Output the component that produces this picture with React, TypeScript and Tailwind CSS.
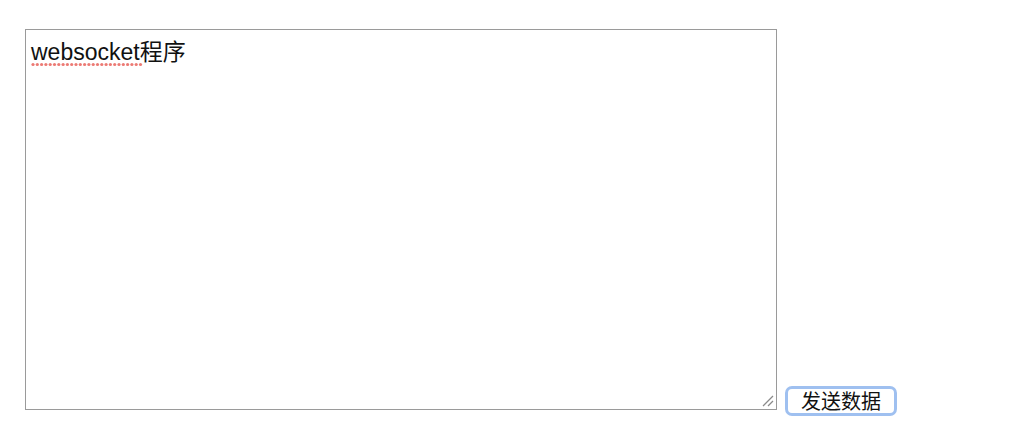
export default function App() {
  return (
    <div className="w-[1014px] h-[438px] bg-white pl-[25px] pt-[29px]">
      <div className="flex items-end gap-[8px]">
        <div className="relative w-[752px] h-[381px]">
          <textarea
            defaultValue="websocket程序"
            spellCheck={false}
            className="block w-full h-full resize-none border border-[#9a9a9a] bg-white pl-[5px] pt-[9px] text-[23px] leading-[26px] text-[#111] outline-none"
            style={{ fontFamily: '"Liberation Sans", "Noto Sans CJK SC", sans-serif' }}
          />
          {/* spellcheck squiggle */}
          <svg className="absolute left-[6px] top-[33px]" width="112" height="5" viewBox="0 0 112 5">
            {Array.from({ length: 26 }).map((_, i) => (
              <circle key={i} cx={2 + i * 4.3} cy={2.5} r={1.6} fill="#ec7a74" />
            ))}
          </svg>
          {/* resize grip */}
          <svg className="absolute right-[3px] bottom-[3px]" width="12" height="12" viewBox="0 0 12 12">
            <line x1="1" y1="11" x2="11" y2="1" stroke="#8a8a8a" strokeWidth="1.2" />
            <line x1="6" y1="11" x2="11" y2="6" stroke="#8a8a8a" strokeWidth="1.2" />
          </svg>
        </div>
        <button
          className="-mb-[6px] h-[30px] rounded-[7px] border-[3px] border-[#9fc0f0] bg-white px-[13px] text-[20px] leading-none text-[#111]"
          style={{ fontFamily: '"Noto Sans CJK SC", sans-serif' }}
        >
          发送数据
        </button>
      </div>
    </div>
  )
}
